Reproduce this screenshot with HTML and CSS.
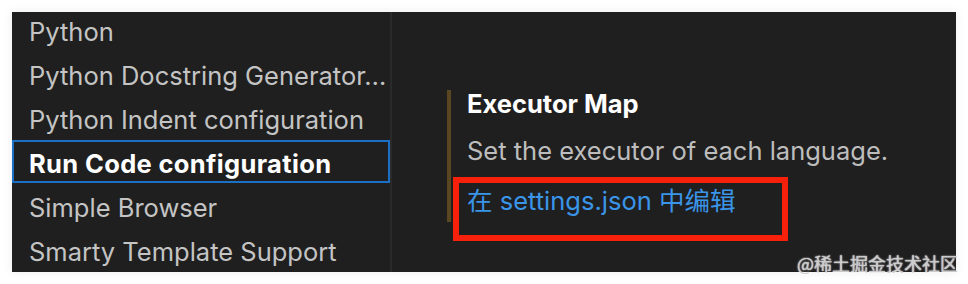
FILE: index.html
```html
<!DOCTYPE html>
<html lang="zh">
<head>
<meta charset="utf-8">
<link rel="stylesheet" href="styles.css">
</head>
<body>
<div class="page">
  <div class="panel">
    <div class="toc">
      <div class="toc-list">
        <div class="toc-item">Python</div>
        <div class="toc-item">Python Docstring Generator…</div>
        <div class="toc-item">Python Indent configuration</div>
        <div class="toc-item selected">Run Code configuration</div>
        <div class="toc-item">Simple Browser</div>
        <div class="toc-item">Smarty Template Support</div>
      </div>
    </div>
    <div class="divider"></div>
    <div class="content">
      <div class="setting">
        <div class="setting-title">Executor Map</div>
        <div class="setting-desc">Set the executor of each language.</div>
        <div class="setting-link-wrap">
          <span class="setting-link">在 settings.json 中编辑</span>
        </div>
      </div>
    </div>
  </div>
  <div class="watermark">@稀土掘金技术社区</div>
</div>
</body>
</html>
```
FILE: styles.css
```css
* { box-sizing: border-box; }
html, body { margin: 0; padding: 0; background: #ffffff; }
body {
  width: 968px;
  height: 284px;
  overflow: hidden;
  font-family: Inter, "Noto Sans CJK SC", sans-serif;
}
.page {
  position: relative;
  padding: 12px;
  height: 284px;
}
.panel {
  display: flex;
  width: 944px;
  height: 260px;
  background: #1f1f1f;
  box-shadow: 0 0 10px rgba(0,0,0,0.08);
  overflow: hidden;
}
.toc {
  width: 378px;
  overflow: hidden;
}
.toc-list {
  margin-top: -4px;
}
.toc-item {
  height: 44px;
  padding-top: 4px;
  line-height: 40px;
  padding-left: 17px;
  font-size: 25.5px;
  color: #c4c4c4;
  white-space: nowrap;
}
.toc-item.selected {
  color: #ffffff;
  font-weight: 700;
  letter-spacing: 0.35px;
  border: 2px solid #1b6fc4;
  padding-top: 2px;
  height: 43px;
  padding-left: 15px;
  margin-bottom: 1px;
}
.divider {
  width: 2px;
  background: #2a2a2a;
}
.content {
  flex: 1;
  padding: 78px 0 0 55px;
}
.setting {
  border-left: 4px solid #5b4622;
  padding-left: 16px;
  height: 132px;
}
.setting-title {
  font-size: 25.5px;
  font-weight: 700;
  color: #ffffff;
  line-height: 28px;
}
.setting-desc {
  font-size: 25.5px;
  color: #bdbdbd;
  line-height: 28px;
  margin-top: 19px;
}
.setting-link-wrap {
  margin-top: 12px;
  margin-left: -14px;
  width: 335px;
  height: 64px;
  border: 6px solid #f7200a;
  padding: 4px 0 0 8px;
  position: relative;
  z-index: 1;
}
.setting-link {
  font-size: 25.5px;
  color: #3a95e8;
  line-height: 28px;
  white-space: nowrap;
}
.watermark {
  position: absolute;
  right: 10px;
  bottom: 8px;
  font-size: 18px;
  color: rgba(200,200,200,0.9);
  text-shadow: 0 0 1px rgba(255,255,255,0.9), 0 0 2px rgba(255,255,255,0.6);
  font-family: "Noto Sans CJK SC", sans-serif;
}
```
